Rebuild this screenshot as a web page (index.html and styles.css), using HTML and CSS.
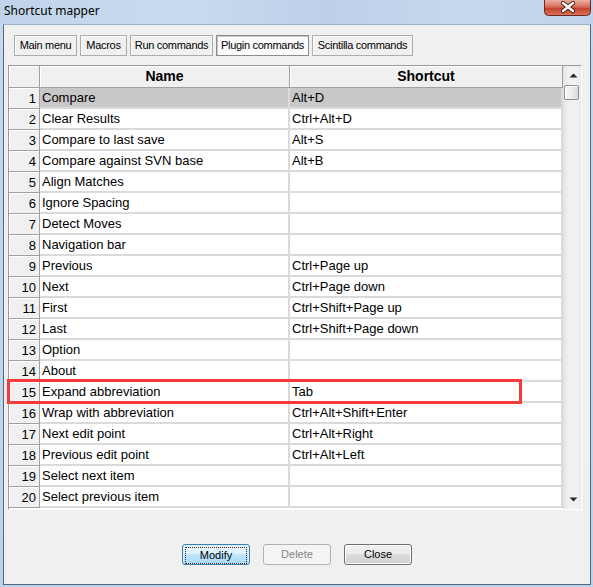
FILE: index.html
```html
<!DOCTYPE html>
<html>
<head>
<meta charset="utf-8">
<link rel="stylesheet" href="styles.css">
</head>
<body>
<div class="window">
  <div class="titlebar">
    <span class="title">Shortcut mapper</span>
    <div class="close">
      <svg width="47" height="16" viewBox="0 0 47 16">
        <defs>
          <linearGradient id="cg" x1="0" y1="0" x2="0" y2="1">
            <stop offset="0" stop-color="#eab0a3"/>
            <stop offset="0.45" stop-color="#d66a56"/>
            <stop offset="0.55" stop-color="#c7422d"/>
            <stop offset="1" stop-color="#d9775c"/>
          </linearGradient>
        </defs>
        <path d="M0.5 0 V11.5 Q0.5 15.5 4.5 15.5 H42.5 Q46.5 15.5 46.5 11.5 V0" fill="url(#cg)" stroke="#6b2a21" stroke-width="1"/>
        <path d="M19 3 L29 11 M29 3 L19 11" stroke="#4a1c16" stroke-width="4.2" stroke-linecap="round"/>
        <path d="M19 3 L29 11 M29 3 L19 11" stroke="#ffffff" stroke-width="2.4" stroke-linecap="round"/>
      </svg>
    </div>
  </div>
  <div class="client">
    <div class="tabs">
      <div class="tab tab-main">Main menu</div>
      <div class="tab tab-macros">Macros</div>
      <div class="tab tab-run">Run commands</div>
      <div class="tab tab-plugin active">Plugin commands</div>
      <div class="tab tab-scintilla">Scintilla commands</div>
    </div>
    <div class="grid">
      <div class="table">
        <div class="row header">
          <div class="fixed"></div>
          <div class="hcell name">Name</div>
          <div class="hcell sc">Shortcut</div>
        </div>
        <div class="row selected"><div class="fixed">1</div><div class="cell name">Compare</div><div class="cell sc">Alt+D</div></div>
        <div class="row"><div class="fixed">2</div><div class="cell name">Clear Results</div><div class="cell sc">Ctrl+Alt+D</div></div>
        <div class="row"><div class="fixed">3</div><div class="cell name">Compare to last save</div><div class="cell sc">Alt+S</div></div>
        <div class="row"><div class="fixed">4</div><div class="cell name">Compare against SVN base</div><div class="cell sc">Alt+B</div></div>
        <div class="row"><div class="fixed">5</div><div class="cell name">Align Matches</div><div class="cell sc"></div></div>
        <div class="row"><div class="fixed">6</div><div class="cell name">Ignore Spacing</div><div class="cell sc"></div></div>
        <div class="row"><div class="fixed">7</div><div class="cell name">Detect Moves</div><div class="cell sc"></div></div>
        <div class="row"><div class="fixed">8</div><div class="cell name">Navigation bar</div><div class="cell sc"></div></div>
        <div class="row"><div class="fixed">9</div><div class="cell name">Previous</div><div class="cell sc">Ctrl+Page up</div></div>
        <div class="row"><div class="fixed">10</div><div class="cell name">Next</div><div class="cell sc">Ctrl+Page down</div></div>
        <div class="row"><div class="fixed">11</div><div class="cell name">First</div><div class="cell sc">Ctrl+Shift+Page up</div></div>
        <div class="row"><div class="fixed">12</div><div class="cell name">Last</div><div class="cell sc">Ctrl+Shift+Page down</div></div>
        <div class="row"><div class="fixed">13</div><div class="cell name">Option</div><div class="cell sc"></div></div>
        <div class="row"><div class="fixed">14</div><div class="cell name">About</div><div class="cell sc"></div></div>
        <div class="row"><div class="fixed">15</div><div class="cell name">Expand abbreviation</div><div class="cell sc">Tab</div></div>
        <div class="row"><div class="fixed">16</div><div class="cell name">Wrap with abbreviation</div><div class="cell sc">Ctrl+Alt+Shift+Enter</div></div>
        <div class="row"><div class="fixed">17</div><div class="cell name">Next edit point</div><div class="cell sc">Ctrl+Alt+Right</div></div>
        <div class="row"><div class="fixed">18</div><div class="cell name">Previous edit point</div><div class="cell sc">Ctrl+Alt+Left</div></div>
        <div class="row"><div class="fixed">19</div><div class="cell name">Select next item</div><div class="cell sc"></div></div>
        <div class="row"><div class="fixed">20</div><div class="cell name">Select previous item</div><div class="cell sc"></div></div>
      </div>
      <div class="scrollbar">
        <div class="sb-btn">
          <svg width="9" height="5" viewBox="0 0 9 5"><path d="M0.5 4.5 L4.5 0.5 L8.5 4.5 Z" fill="#2b2b2b"/></svg>
        </div>
        <div class="thumb"></div>
        <div class="sb-track"></div>
        <div class="sb-btn">
          <svg width="9" height="5" viewBox="0 0 9 5"><path d="M0.5 0.5 L4.5 4.5 L8.5 0.5 Z" fill="#2b2b2b"/></svg>
        </div>
      </div>
      <div class="highlight"></div>
    </div>
    <div class="buttons">
      <div class="btn btn-default"><span class="focus">Modify</span></div>
      <div class="btn btn-disabled">Delete</div>
      <div class="btn">Close</div>
    </div>
  </div>
</div>
</body>
</html>
```

FILE: styles.css
```css
body {
  margin: 0;
}

.window {
  width: 593px;
  height: 587px;
  display: flex;
  flex-direction: column;
  background: linear-gradient(180deg, #b4cbe4 0%, #c8daee 20px, #c3d7ec 60px, #bcd2ea 100%);
  font-family: "Liberation Sans", Arial, sans-serif;
  overflow: hidden;
}

.titlebar {
  height: 24px;
  flex: none;
  display: flex;
  align-items: flex-start;
  background: linear-gradient(90deg, #bfd3ea 0%, #c9dbef 30%, #bcd0e8 55%, #c6d9ee 80%, #bed2e9 100%);
}

.title {
  font-family: "Noto Sans", "Open Sans", sans-serif;
  font-size: 12px;
  line-height: 16px;
  padding: 3px 0 0 4px;
  color: #000;
}

.close {
  margin-left: auto;
  margin-right: 2px;
  width: 47px;
  height: 16px;
}

.close svg {
  display: block;
}

.client {
  margin-left: 3px;
  width: 588px;
  height: 561px;
  box-sizing: border-box;
  border: 1px solid #56657a;
  border-top-color: #9db1c8;
  background: #f0f0f0;
}

.tabs {
  display: flex;
  gap: 3px;
  padding: 10px 0 0 10px;
  height: 21px;
}

.tab {
  height: 21px;
  box-sizing: border-box;
  border: 1px solid #acacac;
  box-shadow: inset 1px 1px 0 #fdfdfd;
  background: #f0f0f0;
  font-size: 11px;
  letter-spacing: -0.3px;
  line-height: 19px;
  text-align: center;
  color: #000;
}

.tab.active {
  background: #fbfbfb;
  border-color: #8c8c8c;
  box-shadow: inset 1px 1px 0 #c9c9c9;
}

.tab-main { width: 63px; }
.tab-macros { width: 47px; }
.tab-run { width: 83px; }
.tab-plugin { width: 93px; }
.tab-scintilla { width: 101px; }

.grid {
  position: relative;
  margin: 9px 0 0 4px;
  width: 574px;
  height: 445px;
  box-sizing: border-box;
  border: 1px solid;
  border-color: #9a9a9a #ffffff #ffffff #9a9a9a;
  background: #ffffff;
  display: flex;
}

.table {
  width: 554px;
  display: flex;
  flex-direction: column;
}

.row {
  display: flex;
  height: 21px;
  font-size: 13px;
  color: #000;
}

.row.header {
  height: 22px;
}

.fixed {
  width: 31px;
  flex: none;
  box-sizing: border-box;
  background: #f0f0f0;
  border-right: 1px solid #a0a0a0;
  border-bottom: 1px solid #a0a0a0;
  box-shadow: inset 1px 1px 0 #ffffff;
  text-align: right;
  padding-right: 3px;
  line-height: 21px;
}

.hcell {
  box-sizing: border-box;
  background: #f0f0f0;
  border-right: 1px solid #a0a0a0;
  border-bottom: 1px solid #a0a0a0;
  box-shadow: inset 1px 1px 0 #ffffff;
  text-align: center;
  font-weight: bold;
  font-size: 14px;
  line-height: 21px;
}

.name {
  width: 250px;
  flex: none;
}

.sc {
  width: 273px;
  flex: none;
}

.cell {
  box-sizing: border-box;
  border-right: 2px solid #dadada;
  border-bottom: 2px solid #dadada;
  padding-left: 2px;
  line-height: 20px;
  white-space: nowrap;
  overflow: hidden;
}

.selected .cell {
  background: #c8c8c8;
}

.scrollbar {
  width: 18px;
  flex: none;
  display: flex;
  flex-direction: column;
  background: linear-gradient(90deg, #e6e6e6 0%, #f1f1f1 30%, #f1f1f1 80%, #e8e8e8 100%);
  border-left: 1px solid #e2e2e2;
  box-sizing: border-box;
}

.sb-btn {
  height: 19px;
  flex: none;
  display: flex;
  align-items: center;
  justify-content: center;
}

.sb-btn svg {
  display: block;
  margin-left: 1px;
}

.thumb {
  flex: none;
  width: 15px;
  height: 15px;
  margin-left: 0;
  box-sizing: border-box;
  border: 1px solid #8e8e8e;
  border-radius: 2px;
  background: linear-gradient(90deg, #f7f7f7 0%, #ececec 50%, #d9d9d9 100%);
  box-shadow: inset 1px 1px 0 #ffffff;
}

.sb-track {
  flex: 1;
}

.highlight {
  position: absolute;
  left: -2px;
  top: 313px;
  width: 515px;
  height: 25px;
  box-sizing: border-box;
  border: 3px solid #f43a3a;
  pointer-events: none;
}

.buttons {
  display: flex;
  justify-content: center;
  gap: 13px;
  margin-top: 34px;
}

.btn {
  width: 68px;
  height: 21px;
  box-sizing: border-box;
  border: 1px solid #707070;
  border-radius: 3px;
  background: linear-gradient(180deg, #f2f2f2 0%, #ebebeb 50%, #dddddd 50%, #cfcfcf 100%);
  box-shadow: inset 0 0 0 1px #fbfbfb;
  font-size: 11px;
  line-height: 19px;
  text-align: center;
  color: #000;
}

.btn-default {
  border-color: #3c7fb1;
  background: linear-gradient(180deg, #eaf6fd 0%, #d9f0fc 50%, #bee6fd 50%, #a7d9f5 100%);
  box-shadow: inset 0 0 0 1px #d6effc;
  padding: 2px;
}

.btn-default .focus {
  display: block;
  height: 15px;
  line-height: 15px;
  border: 1px dotted #4a2020;
}

.btn-disabled {
  border-color: #adb2b5;
  background: #f4f4f4;
  box-shadow: none;
  color: #838383;
}
```
